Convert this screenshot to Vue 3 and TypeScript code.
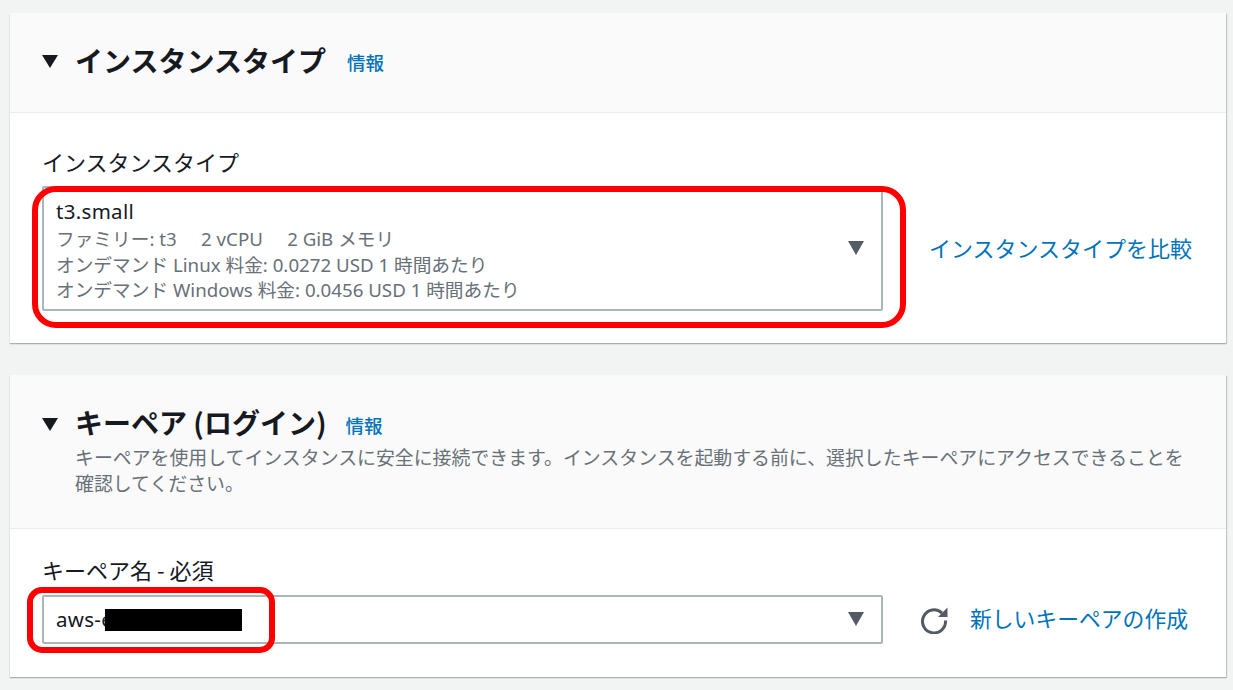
<script setup lang="ts">
const instanceLines: string[] = [
  'ファミリー: t3\u00a0\u00a0\u00a0\u00a0 2 vCPU\u00a0\u00a0\u00a0\u00a0 2 GiB メモリ',
  'オンデマンド Linux 料金: 0.0272 USD 1 時間あたり',
  'オンデマンド Windows 料金: 0.0456 USD 1 時間あたり',
]
</script>

<template>
  <main class="page">
    <section class="card">
      <header class="card-head head-one">
        <span class="caret"></span>
        <h2 class="title">インスタンスタイプ</h2>
        <a class="info">情報</a>
      </header>
      <div class="card-body body-one">
        <div class="label">インスタンスタイプ</div>
        <div class="row row-one">
          <div class="select select-one">
            <div class="select-text">
              <div class="value">t3.small</div>
              <div v-for="line in instanceLines" :key="line" class="meta">{{ line }}</div>
            </div>
            <span class="select-caret"></span>
          </div>
          <a class="link">インスタンスタイプを比較</a>
        </div>
        <div class="mark mark-one"></div>
      </div>
    </section>

    <section class="card second">
      <header class="card-head head-two">
        <div class="head-line">
          <span class="caret"></span>
          <h2 class="title">キーペア (ログイン)</h2>
          <a class="info info-two">情報</a>
        </div>
        <p class="desc">キーペアを使用してインスタンスに安全に接続できます。インスタンスを起動する前に、選択したキーペアにアクセスできることを確認してください。</p>
      </header>
      <div class="card-body body-two">
        <div class="label">キーペア名 - 必須</div>
        <div class="row row-two">
          <div class="select select-two">
            <div class="value value-two">aws-e</div>
            <span class="select-caret"></span>
          </div>
          <svg class="refresh" viewBox="0 0 27 27" width="27" height="27" aria-hidden="true">
            <path d="M21 6.1A11.5 11.5 0 1 0 24.5 13.5" fill="none" stroke="#545b64" stroke-width="3" />
            <path d="M26.5 0.5V10H17z" fill="#545b64" />
          </svg>
          <a class="link">新しいキーペアの作成</a>
        </div>
        <div class="redact"></div>
        <div class="mark mark-two"></div>
      </div>
    </section>
  </main>
</template>

<style>
html, body {
  margin: 0;
  background: #f2f3f3;
}
</style>

<style scoped>
.page {
  box-sizing: border-box;
  width: 1233px;
  height: 690px;
  padding: 13px 7px 0 10px;
  overflow: hidden;
  background: #f2f3f3;
  font-family: "Noto Sans", "Noto Sans CJK JP", sans-serif;
  color: #16191f;
}
.card {
  background: #fff;
  box-shadow: 0 1px 1px 0 #a9b0b3, 1px 1px 1px 0 #c4c9cb, -1px 0 1px -1px #d5dbdb;
}
.second {
  margin-top: 32px;
}
.card-head {
  box-sizing: border-box;
  background: #fafafa;
  border-bottom: 1px solid #eaeded;
  padding-left: 32px;
}
.head-one {
  height: 100px;
  padding-bottom: 6px;
  display: flex;
  align-items: center;
}
.head-two {
  height: 154px;
  padding-top: 28px;
  padding-right: 36px;
}
.head-line {
  display: flex;
  align-items: center;
  height: 38px;
}
.caret {
  width: 0;
  height: 0;
  flex: none;
  border-left: 8px solid transparent;
  border-right: 8px solid transparent;
  border-top: 13px solid #16191f;
  margin-top: 4px;
  margin-right: 17px;
}
.title {
  margin: 0;
  font-size: 28px;
  line-height: 38px;
  font-weight: 700;
  font-family: "Noto Sans CJK JP", sans-serif;
}
.info {
  margin-left: 21px;
  margin-top: 5px;
  font-size: 18.5px;
  line-height: 24px;
  font-weight: 500;
  color: #0073bb;
  font-family: "Noto Sans CJK JP", sans-serif;
}
.info-two {
  margin-left: 19px;
}
.desc {
  margin: 3px 0 0 33px;
  font-size: 18.9px;
  line-height: 26px;
  color: #687078;
  font-family: "Noto Sans CJK JP", sans-serif;
}
.card-body {
  position: relative;
  box-sizing: border-box;
  padding-left: 32px;
}
.body-one {
  height: 230px;
  padding-top: 33px;
}
.body-two {
  height: 148px;
  padding-top: 25px;
}
.label {
  font-size: 22px;
  line-height: 30px;
  font-family: "Noto Sans CJK JP", sans-serif;
}
.row {
  display: flex;
  align-items: center;
}
.row-one {
  margin-top: 10px;
}
.row-two {
  margin-top: 11px;
}
.select {
  box-sizing: border-box;
  width: 841px;
  flex: none;
  position: relative;
  background: #fff;
  border: 2px solid #aab7b8;
  border-radius: 2px;
  padding-left: 12px;
}
.select-one {
  height: 125px;
  padding-top: 9px;
}
.select-two {
  height: 49px;
  display: flex;
  align-items: center;
}
.value {
  font-size: 20.5px;
  line-height: 28px;
  letter-spacing: 0.3px;
  margin-bottom: 1px;
  color: #16191f;
}
.value-two {
  margin-bottom: 2px;
}
.meta {
  font-size: 18.7px;
  line-height: 25.5px;
  color: #687078;
}
.select-caret {
  position: absolute;
  right: 17px;
  top: 50%;
  margin-top: -8px;
  width: 0;
  height: 0;
  border-left: 8px solid transparent;
  border-right: 8px solid transparent;
  border-top: 14px solid #545b64;
}
.link {
  color: #0073bb;
  font-size: 22px;
  line-height: 30px;
  font-family: "Noto Sans CJK JP", sans-serif;
}
.row-one .link {
  margin-left: 46px;
  margin-bottom: 4px;
}
.refresh {
  margin-left: 38px;
  margin-top: 1px;
  flex: none;
}
.row-two .link {
  margin-left: 22px;
  font-size: 21.8px;
  margin-bottom: 3px;
}
.redact {
  position: absolute;
  left: 95px;
  top: 80px;
  width: 137px;
  height: 22px;
  background: #000;
}
.mark {
  position: absolute;
  box-sizing: border-box;
  border: 6px solid #ff0000;
  pointer-events: none;
}
.mark-one {
  left: 22px;
  top: 73px;
  width: 874px;
  height: 142px;
  border-radius: 24px;
}
.mark-two {
  left: 17px;
  top: 58px;
  width: 248px;
  height: 66px;
  border-radius: 15px;
}
</style>
